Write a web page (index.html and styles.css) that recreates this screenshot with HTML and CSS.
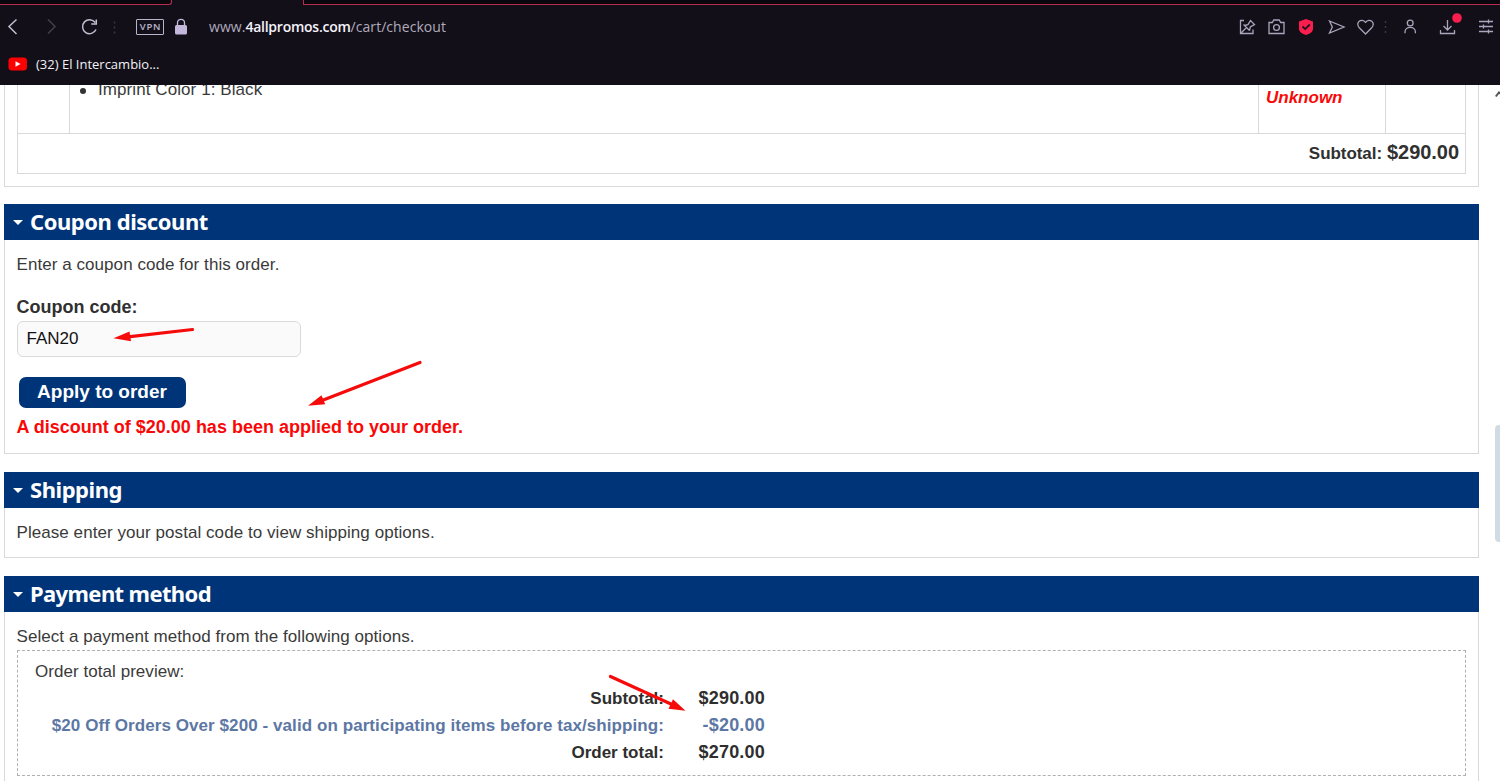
FILE: index.html
```html
<!DOCTYPE html>
<html lang="en">
<head>
<meta charset="utf-8">
<title>Checkout</title>
<link rel="stylesheet" href="styles.css">
</head>
<body>
<div class="window">
  <header class="browser">
    <div class="tabs"><div class="tab-left"></div><div class="tab-right"></div></div>
    <div class="toolbar">
      <svg class="nav-icons" width="120" height="32" viewBox="0 0 120 32">
        <path class="line nav" d="M16.500 8.500L9 15.500l7.500 7.500"/>
        <path class="line nav dim" d="M48 8.500l7 7-7 7"/>
        <path class="line nav" d="M95.200 11.500A7 7 0 1 0 96 18.500M96.300 8.500v4.500h-5"/>
        <path class="dots" d="M114.500 10.500v12"/>
      </svg>
      <span class="vpn">VPN</span>
      <svg class="lock" width="14" height="18" viewBox="0 0 14 18"><path class="shackle" d="M3.500 8V4.800a3.500 3.500 0 0 1 7 0V8"/><rect class="lock-body" x="1" y="7" width="12" height="9.500" rx="1.500"/></svg>
      <span class="url">www.<b>4allpromos.com</b>/cart/checkout</span>
      <svg class="actions" width="270" height="40" viewBox="1230 0 270 40">
        <path class="line" d="M1244 20.500h-3.500v13h12.500v-4M1240.500 33.500L1246.500 27.500M1243.500 24.500l6 6M1244.500 25.500l3.500-.8 2.500-4.200 4 4-4.200 2.500-.8 3.500"/>
        <path class="line" d="M1269 22.500h3.300l1.500-2.500h5.400l1.500 2.500h3.300v11h-15z"/><circle class="line" cx="1276.500" cy="27.500" r="2.900"/>
        <path class="shield" d="M1306 19l7 2.500v7.500c0 3-3.500 5-7 6-3.500-1-7-3-7-6v-7.500z"/><path class="check" d="M1302.500 26.500l2.700 2.600 4.600-4.600"/>
        <path class="line" d="M1329.500 21l14.500 6-14.500 6 2.800-6z"/>
        <path class="line" d="M1365.500 34l-6.200-6.200c-4.600-5 2.300-10.600 6.200-5.500 3.900-5.100 10.800.5 6.200 5.500z"/>
        <path class="dots" d="M1385.500 21v12"/>
        <circle class="line" cx="1410.200" cy="23" r="2.900"/><path class="line" d="M1405 33.200v-1.200c0-6.300 10.400-6.300 10.400 0v1.200"/>
        <path class="line" d="M1447.500 20v10M1443.500 26l4 4 4-4M1440.500 30v3.500h14V30"/><circle class="badge" cx="1457" cy="18" r="4.800"/>
        <path class="line" d="M1479 21.500h14M1479 26.500h14M1479 31.500h14M1488.500 19.500v4M1483.500 24.500v4M1488.500 29.500v4"/>
      </svg>
    </div>
    <div class="bookmarks">
      <svg width="20" height="14" viewBox="0 0 20 14"><rect class="yt" x=".5" y=".5" width="18.500" height="13" rx="3.500"/><path class="play" d="M7.500 4.200v5.600l5-2.800z"/></svg>
      <span class="bookmark-text">(32) El Intercambio...</span>
    </div>
  </header>
  <div class="page">
    <main class="content">
      <section class="cart">
        <div class="cart-table">
          <div class="item-row">
            <div class="cell thumb"></div>
            <div class="cell details"><span class="bullet"></span><span class="imprint">Imprint Color 1: Black</span></div>
            <div class="cell status">Unknown</div>
            <div class="cell price"></div>
          </div>
          <div class="subtotal-row"><span class="sub-label">Subtotal:</span><span class="sub-value">$290.00</span></div>
        </div>
      </section>
      <section class="panel">
        <h2 class="head"><i class="caret"></i><span>Coupon discount</span></h2>
        <div class="body">
          <p class="text">Enter a coupon code for this order.</p>
          <label class="label" for="code">Coupon code:</label>
          <input class="code" id="code" value="FAN20">
          <button class="apply">Apply to order</button>
          <p class="notice">A discount of $20.00 has been applied to your order.</p>
        </div>
      </section>
      <section class="panel">
        <h2 class="head"><i class="caret"></i><span>Shipping</span></h2>
        <div class="body"><p class="text">Please enter your postal code to view shipping options.</p></div>
      </section>
      <section class="panel payment">
        <h2 class="head"><i class="caret"></i><span>Payment method</span></h2>
        <div class="body">
          <p class="text">Select a payment method from the following options.</p>
          <div class="preview">
            <p class="preview-title">Order total preview:</p>
            <div class="totals">
              <span class="name">Subtotal:</span><span class="amount">$290.00</span>
              <span class="name off">$20 Off Orders Over $200 - valid on participating items before tax/shipping:</span><span class="amount off">-$20.00</span>
              <span class="name">Order total:</span><span class="amount">$270.00</span>
            </div>
          </div>
        </div>
      </section>
    </main>
    <aside class="scroll">
      <svg width="8" height="14" viewBox="0 0 8 14"><path class="up" d="M.8 11.500L4 7.500l4 3"/></svg>
      <div class="thumb-bar"></div>
    </aside>
  </div>
  <svg class="arrows" width="1500" height="781" viewBox="0 0 1500 781">
    <path class="shaft" d="M192.500 329.500L128 336.800M420 362.500L322 400.500M610.500 676.500L672 704.500"/>
    <path class="tip" d="M113.500 338.300l16-6.800 1.500 9.800zM308 405.800l13.500-10.500 3.700 9zM685.500 710.800l-12.500-11.500-4.500 9.500z"/>
  </svg>
</div>
</body>
</html>
```
FILE: styles.css
```css
* { box-sizing: border-box; }
body { margin: 0; font-family: Arial, "Liberation Sans", sans-serif; color: #3a3a3a; background: #fff; overflow: hidden; }
p, h2 { margin: 0; font-weight: normal; }
svg { display: block; flex: none; }
.window { position: relative; width: 1500px; height: 781px; overflow: hidden; white-space: nowrap; }

.browser { height: 85px; background: #120f19; font-family: "Segoe UI", "Open Sans", sans-serif; }
.tabs { height: 5px; display: flex; justify-content: space-between; background: #120f19; }
.tab-left { width: 172px; border: solid #b52c4c; border-width: 0 1px 1px 0; border-bottom-right-radius: 3px; background: #09070d; }
.tab-right { width: 1197px; border: solid #b52c4c; border-width: 0 0 1px 1px; background: #09070d; }
.toolbar { height: 44px; display: flex; align-items: center; }
.line { fill: none; stroke: #aaa5ba; stroke-width: 1.3; }
.nav { stroke-width: 1.5; stroke: #c3bdd1; }
.nav.dim { stroke: #423e4c; }
.dots { stroke: #3b3745; stroke-width: 1.5; stroke-dasharray: 2 3; }
.vpn { width: 28px; height: 16px; margin-left: 16px; border: 1px solid #bab3ca; border-radius: 1px; color: #bdb6cc; font: 600 9.5px/14px "Open Sans", sans-serif; letter-spacing: .7px; text-align: center; padding-left: 1px; }
.lock { margin-left: 10px; }
.shackle { fill: none; stroke: #c3b8dc; stroke-width: 1.3; }
.lock-body { fill: #c3b8dc; }
.url { width: 260px; margin-left: 21px; font-size: 14px; line-height: 20px; color: #b0abbb; letter-spacing: .05px; }
.url b { color: #f5f3fa; font-weight: 600; letter-spacing: -.25px; }
.actions { margin: -5px 0 0 auto; align-self: flex-start; }
.shield, .badge { fill: #fa1e4e; }
.check { fill: none; stroke: #24111e; stroke-width: 1.8; }
.bookmarks { height: 30px; padding-left: 8px; display: flex; align-items: center; gap: 8px; }
.yt { fill: #f00; }
.play { fill: #fff; }
.bookmark-text { color: #f3f1f5; font-size: 13px; line-height: 20px; }

.page { height: 696px; display: flex; overflow: hidden; }
.content { width: 1475px; margin-left: 4px; flex: none; }
.cart { height: 102px; border: solid #d8d9db; border-width: 0 1px 1px; padding: 0 12px; }
.cart-table { height: 89px; border: solid #d8d9db; border-width: 0 1px 1px; }
.item-row { height: 49px; display: flex; border-bottom: 1px solid #d8d9db; }
.cell { border-right: 1px solid #d8d9db; }
.thumb { width: 52px; }
.details { flex: 1; display: flex; padding-left: 10px; }
.bullet { width: 6px; height: 6px; margin: 3px 12px 0 0; border-radius: 50%; background: #333; }
.imprint { font-size: 17px; line-height: 20px; margin-top: -5px; letter-spacing: .08px; }
.status { width: 127px; padding: 3px 7px; color: #f90808; font-weight: bold; font-style: italic; font-size: 17px; line-height: 20px; }
.price { width: 79px; border-right: 0; }
.subtotal-row { height: 39px; display: flex; justify-content: flex-end; align-items: center; gap: 5px; padding-right: 6px; font-weight: bold; color: #303030; }
.sub-label { font-size: 17px; letter-spacing: -.05px; }
.sub-value { font-size: 20px; letter-spacing: -.05px; line-height: 22px; margin-top: -3px; }

.panel { margin-top: 18px; border: solid #d8d9db; border-width: 0 1px 1px; }
.cart + .panel { margin-top: 17px; }
.payment { height: 260px; }
.head { height: 36px; margin: 0 -1px; padding-left: 9px; display: flex; align-items: center; gap: 6px; background: #003479; color: #fff; font: bold 22px/30px "Trebuchet MS", "Noto Sans", sans-serif; letter-spacing: -.45px; }
.caret { border: 5.5px solid transparent; border-top-color: #fff; border-bottom: 0; }
.head span { margin: 0 0 2px 1px; }
.payment .head { letter-spacing: -.62px; }
.body { padding: 13px 12px 12px 11.5px; display: flex; flex-direction: column; align-items: flex-start; }
.text { font-size: 17px; line-height: 24px; letter-spacing: .06px; }
.label { margin-top: 19px; font-weight: bold; font-size: 18px; line-height: 22px; color: #303030; }
.code { width: 284px; height: 36px; margin: 3px 0 0; padding: 0 9px; border: 1px solid #d9dadb; border-radius: 6px; background: #fafafa; color: #111; font: 17px Arial, "Liberation Sans", sans-serif; }
.apply { width: 167px; height: 31px; margin: 20px 0 0 2px; padding: 0 0 1px; border: 0; border-radius: 7px; background: #003479; color: #fff; font: bold 19px/28px Arial, "Liberation Sans", sans-serif; }
.notice { margin: 7px 0 2px; color: #f90808; font-weight: bold; font-size: 18px; line-height: 24px; }
.preview { width: 1449px; height: 126px; margin-top: 1px; border: 1px dashed #b0b0b0; padding: 9px 17.5px; }
.preview-title { font-size: 17px; line-height: 24px; letter-spacing: .05px; }
.totals { width: 730px; margin-top: 1px; display: grid; grid-template-columns: 629px 101px; grid-auto-rows: 27px; font-weight: bold; line-height: 27px; color: #2e2e2e; text-align: right; }
.name { font-size: 17px; }
.name.off { letter-spacing: .075px; }
.amount { font-size: 18px; letter-spacing: .2px; }
.totals .off { color: #5d77a4; }

.scroll { margin-left: auto; width: 5px; overflow: hidden; }
.thumb-bar { width: 10px; height: 117px; margin-top: 326px; border-radius: 4px; background: #d1dbe4; }
.up { fill: none; stroke: #555; stroke-width: 2; }
.arrows { position: absolute; inset: 0; pointer-events: none; }
.shaft { stroke: #f60b0b; stroke-width: 3.2; stroke-linecap: round; }
.tip { fill: #f60b0b; }
```
